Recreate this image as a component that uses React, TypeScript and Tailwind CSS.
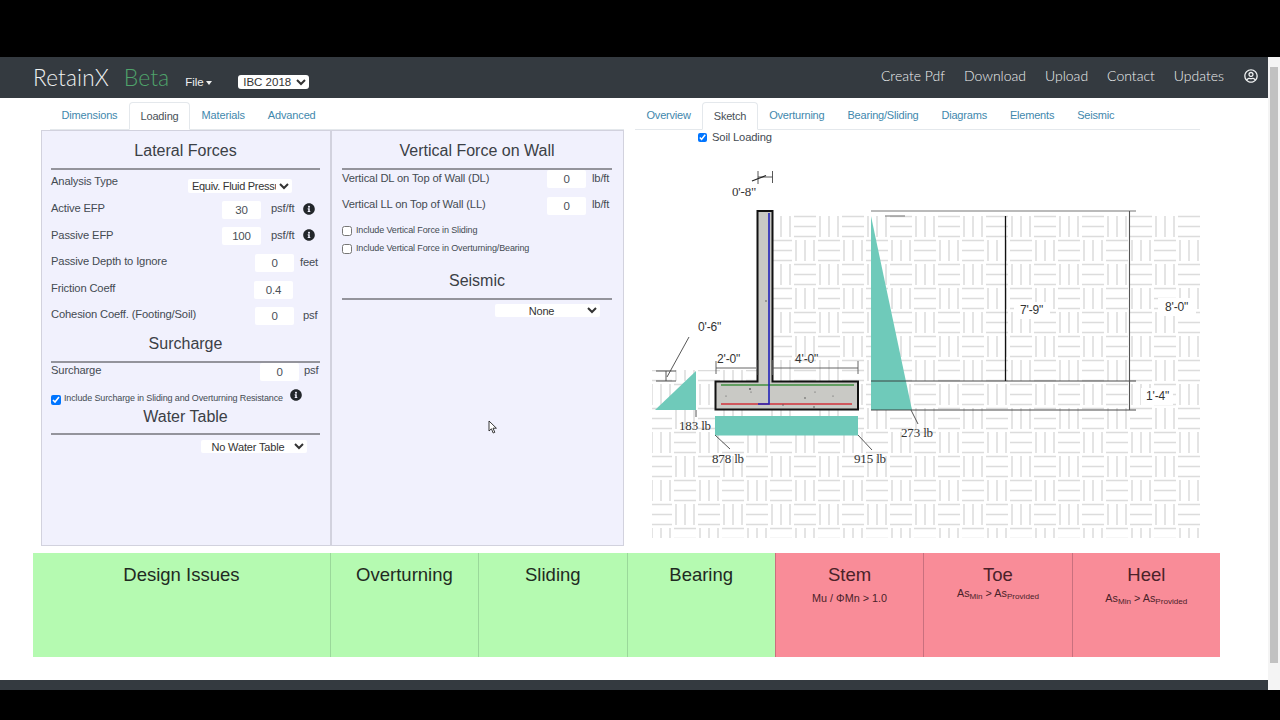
import { FaInfoCircle, FaRegUserCircle } from "react-icons/fa";

const leftTabs = ["Dimensions", "Loading", "Materials", "Advanced"];
const rightTabs = ["Overview", "Sketch", "Overturning", "Bearing/Sliding", "Diagrams", "Elements", "Seismic"];
const navLinks = ["Create Pdf", "Download", "Upload", "Contact", "Updates"];

function Tabs({ items, active }: { items: string[]; active: string }) {
  return (
    <div className="flex h-[28px] border-b border-[#e4e8ec] text-[11px]">
      {items.map((item) =>
        item === active ? (
          <div
            key={item}
            className="-mb-px flex h-[28px] items-center rounded-t border border-[#e4e8ec] border-b-white bg-white px-[10.5px] text-[#495057]"
          >
            {item}
          </div>
        ) : (
          <div key={item} className="flex items-center px-[11.5px] text-[#3f88ad]">
            {item}
          </div>
        )
      )}
    </div>
  );
}

function Heading({ title, className }: { title: string; className: string }) {
  return (
    <div className={`flex justify-center border-b-2 border-[#94949c] text-[16px] tracking-normal text-[#3b4046] ${className}`}>
      {title}
    </div>
  );
}

function NumInput({ value, className = "" }: { value: string; className?: string }) {
  return (
    <input
      readOnly
      value={value}
      className={`h-[18px] w-[39px] rounded-[2px] bg-white text-center text-[11.5px] text-[#495057] ${className}`}
    />
  );
}

function Info({ className = "" }: { className?: string }) {
  return <FaInfoCircle className={`text-[12px] text-[#23272b] ${className}`} />;
}

function Row({ label, children }: { label: string; children: React.ReactNode }) {
  return (
    <div className="relative flex h-[26.6px] items-center">
      <span className="mb-[3px]">{label}</span>
      {children}
    </div>
  );
}

function Sketch() {
  return (
    <svg width="570" height="400" viewBox="640 146 570 400" className="block">
      <defs>
        <pattern id="weave" x="961" y="215" width="48" height="48" patternUnits="userSpaceOnUse">
          <g stroke="#dcdcdc" strokeWidth="1.5" fill="none">
            <path d="M3 1V22M12 1V22M21 1V22" />
            <path d="M25 1.5H47M25 11.5H47M25 21.5H47" />
            <path d="M1 25.5H23M1 35.5H23M1 45.5H23" />
            <path d="M27 25V46M36 25V46M45 25V46" />
          </g>
        </pattern>
      </defs>
      <rect x="772" y="215" width="430" height="323" fill="url(#weave)" />
      <rect x="652" y="370" width="120" height="168" fill="url(#weave)" />

      {/* stem and footing */}
      <path d="M757.5 211H772.5V381.5H858V409.5H715.5V381.5H757.5Z" fill="#c9c9c5" stroke="#111" strokeWidth="2" />
      <path d="M721 385H854" stroke="#3f8f3f" strokeWidth="1.6" />
      <path d="M721 404H852" stroke="#d0303a" strokeWidth="1.6" />
      <path d="M769 213V404H758" stroke="#2222b8" strokeWidth="1.6" fill="none" />
      <g fill="#555">
        <circle cx="766" cy="301" r="0.8" />
        <circle cx="750" cy="389" r="0.9" />
        <circle cx="751" cy="392" r="0.6" />
        <circle cx="805" cy="398" r="0.8" />
        <circle cx="815" cy="392" r="0.6" />
        <circle cx="783" cy="405" r="0.7" />
        <circle cx="833" cy="396" r="0.6" />
        <circle cx="814" cy="407" r="0.8" />
        <circle cx="726" cy="396" r="0.6" />
      </g>

      {/* soil pressure */}
      <g fill="#6fcaba">
        <path d="M655 410L696 371V410Z" />
        <path d="M715 416H858V435.5H715Z" />
        <path d="M871 216L912 410H871Z" />
      </g>

      {/* dimension lines */}
      <g stroke="#444" strokeWidth="0.9" fill="none">
        <path d="M758 171V184M772.5 171V183M758 177H772.5" />
        <path d="M752 181L766 175.5" stroke="#222" strokeWidth="1.2" />
        <path d="M871 211H1136" stroke="#777" strokeWidth="1.2" />
        <path d="M885 216H905" stroke="#888" strokeWidth="1.2" />
        <path d="M871 381H1136M871 410H1136" stroke="#333" />
        <path d="M1129.5 211V410" stroke="#555" strokeWidth="1.1" />
        <path d="M1005.5 216V381" stroke="#111" strokeWidth="1.3" />
        <path d="M716 361V374M716 368H756M758 360V375M772.5 360V375M773 368H858M858 361V374" stroke="#555" />
        <path d="M656 371H676M656 381H676M666 371V381M689 337L667 377" />
        <path d="M696 410V417M715 435L730 449M858 435L872 450M911 410L918 424" />
      </g>

      {/* labels */}
      <rect x="1014" y="302" width="36" height="17" fill="#fff" />
      <rect x="1158" y="298" width="38" height="18" fill="#fff" />
      <rect x="1141" y="388" width="32" height="17" fill="#fff" />
      <g fontFamily="'Liberation Serif', serif" fontSize="13" fill="#333">
        <text x="732" y="196">0'-8"</text>
        <text x="679" y="430">183 lb</text>
        <text x="712" y="463">878 lb</text>
        <text x="854" y="463">915 lb</text>
        <text x="901" y="437">273 lb</text>
      </g>
      <g fontFamily="'Liberation Sans', sans-serif" fontSize="12" fill="#333">
        <text x="698" y="331">0'-6"</text>
        <text x="717" y="363">2'-0"</text>
        <text x="795" y="363">4'-0"</text>
        <text x="1020" y="314">7'-9"</text>
        <text x="1165" y="311">8'-0"</text>
        <text x="1146" y="400">1'-4"</text>
      </g>
    </svg>
  );
}

function StatusCard({ title, tone, children }: { title: string; tone: "ok" | "bad"; children?: React.ReactNode }) {
  return (
    <div
      className={
        tone === "ok"
          ? "border-l border-[#9ad89a] bg-[#b5fab1] pt-[11px] text-center tracking-normal text-[#1f2a22] first:border-l-0"
          : "border-l border-[#c9707e] bg-[#f98c98] pt-[11px] text-center tracking-normal text-[#4a2229]"
      }
    >
      <div className="text-[18.5px] leading-[22px]">{title}</div>
      {children}
    </div>
  );
}

export default function App() {
  return (
    <div className="flex h-[720px] w-[1280px] flex-col overflow-hidden bg-black font-['Liberation_Sans',sans-serif] text-[11.2px] tracking-[-0.15px] text-[#444b52]">
      <div className="h-[57px] shrink-0" />
      <div className="flex h-[633px] shrink-0">
        <div className="flex w-[1268px] flex-col bg-white">
          {/* nav */}
          <div className="flex h-[41px] shrink-0 items-center bg-[#343a40] pl-[33px] pr-[10px] font-['Lato',sans-serif] tracking-normal text-[#eef0f0]">
            <span className="text-[22.5px] font-light tracking-[0.2px]">RetainX</span>
            <span className="ml-[15px] text-[23px] font-light text-[#4fa36b]">Beta</span>
            <span className="ml-[16px] mt-[11px] flex items-center font-['Liberation_Sans',sans-serif] text-[11.5px]">
              File
              <span className="ml-[2px] border-x-[3.5px] border-t-[4px] border-x-transparent border-t-[#eef0f0]" />
            </span>
            <select className="ml-[26px] mt-[8px] h-[14px] w-[71px] rounded-[3px] bg-white text-center font-['Liberation_Sans',sans-serif] text-[11.5px] text-[#333] [text-align-last:center]">
              <option>IBC 2018</option>
            </select>
            <div className="mb-[4px] ml-auto flex items-center gap-[19px] text-[14px] font-light">
              {navLinks.map((link) => (
                <span key={link}>{link}</span>
              ))}
              <FaRegUserCircle className="ml-[1px] text-[14px]" />
            </div>
          </div>

          {/* panes */}
          <div className="flex h-[448px] shrink-0 pl-[41px] pt-[4px]">
            <div className="w-[583px]">
              <div className="pl-[9px]">
                <Tabs items={leftTabs} active="Loading" />
              </div>
              <div className="flex h-[416px] border border-[#d2d2de] bg-[#f1f1fd]">
                <div className="w-[290px] border-r-2 border-[#d2d2de] pl-[9px] pr-[10px]">
                  <Heading title="Lateral Forces" className="h-[39px] items-center pt-[2px]" />
                  <Row label="Analysis Type">
                    <select className="ml-auto mr-[28px] mt-[5px] h-[14px] w-[104px] rounded-[2px] bg-white text-[11px] tracking-[-0.3px] text-[#333]">
                      <option>Equiv. Fluid Pressure</option>
                    </select>
                  </Row>
                  <Row label="Active EFP">
                    <NumInput value="30" className="absolute left-[171px]" />
                    <span className="absolute left-[220px] mb-[2px]">psf/ft</span>
                    <Info className="absolute left-[252px] mb-[2px]" />
                  </Row>
                  <Row label="Passive EFP">
                    <NumInput value="100" className="absolute left-[171px]" />
                    <span className="absolute left-[220px] mb-[2px]">psf/ft</span>
                    <Info className="absolute left-[252px] mb-[2px]" />
                  </Row>
                  <Row label="Passive Depth to Ignore">
                    <NumInput value="0" className="absolute left-[204px]" />
                    <span className="absolute left-[249px] mb-[2px]">feet</span>
                  </Row>
                  <Row label="Friction Coeff">
                    <NumInput value="0.4" className="absolute left-[203px]" />
                  </Row>
                  <Row label="Cohesion Coeff. (Footing/Soil)">
                    <NumInput value="0" className="absolute left-[204px]" />
                    <span className="absolute left-[252px] mb-[2px]">psf</span>
                  </Row>
                  <Heading title="Surcharge" className="h-[33px] items-start pt-[2px]" />
                  <div className="relative flex h-[18px] items-center">
                    <span className="mb-[3px]">Surcharge</span>
                    <NumInput value="0" className="absolute left-[209px]" />
                    <span className="absolute left-[253px] mb-[2px]">psf</span>
                  </div>
                  <div className="relative flex h-[25px] items-end">
                    <input type="checkbox" readOnly checked className="mb-[1px] h-[10px] w-[10px] accent-[#0075ff]" />
                    <span className="ml-[3px] text-[9px] tracking-[-0.13px]">Include Surcharge in Sliding and Overturning Resistance</span>
                    <Info className="absolute left-[239px] top-[8px]" />
                  </div>
                  <div className="-mt-px">
                    <Heading title="Water Table" className="h-[30px] items-start" />
                  </div>
                  <div className="mt-[5px] flex">
                    <select className="ml-[150px] h-[13px] w-[106px] rounded-[2px] bg-white text-[11px] text-[#333] [text-align-last:center]">
                      <option>No Water Table</option>
                    </select>
                  </div>
                </div>
                <div className="w-[291px] pl-[10px] pr-[11px]">
                  <Heading title="Vertical Force on Wall" className="h-[39px] items-center pt-[2px]" />
                  <div className="relative flex h-[18px] items-center">
                    <span className="mb-[2px]">Vertical DL on Top of Wall (DL)</span>
                    <NumInput value="0" className="absolute left-[205px]" />
                    <span className="absolute left-[250px] mb-[2px]">lb/ft</span>
                  </div>
                  <div className="relative mt-[8.5px] flex h-[18px] items-center">
                    <span className="mb-[2px]">Vertical LL on Top of Wall (LL)</span>
                    <NumInput value="0" className="absolute left-[205px]" />
                    <span className="absolute left-[250px] mb-[2px]">lb/ft</span>
                  </div>
                  <label className="mt-[7px] flex h-[18px] items-center text-[9px] tracking-[-0.13px]">
                    <input type="checkbox" readOnly className="mr-[4px] h-[10px] w-[10px]" />
                    Include Vertical Force in Sliding
                  </label>
                  <label className="flex h-[18px] items-center text-[9px] tracking-[-0.13px]">
                    <input type="checkbox" readOnly className="mr-[4px] h-[10px] w-[10px]" />
                    Include Vertical Force in Overturning/Bearing
                  </label>
                  <Heading title="Seismic" className="h-[42px] items-start pt-[11px]" />
                  <div className="mt-[4px] flex">
                    <select className="ml-[153px] h-[13px] w-[105px] rounded-[2px] bg-white text-[11px] text-[#333] [text-align-last:center]">
                      <option>None</option>
                    </select>
                  </div>
                </div>
              </div>
            </div>

            <div className="ml-[11px] w-[575px]">
              <div className="w-[565px] tracking-[-0.2px]">
                <Tabs items={rightTabs} active="Sketch" />
              </div>
              <label className="ml-[63px] flex h-[16px] items-center pb-[2px]">
                <input type="checkbox" readOnly checked className="mr-[5px] h-[9px] w-[9px]" />
                Soil Loading
              </label>
              <div className="ml-[5px]">
                <Sketch />
              </div>
            </div>
          </div>

          {/* status */}
          <div className="ml-[33px] mt-[7px] grid h-[104px] w-[1187px] shrink-0 grid-cols-[2fr_repeat(6,1fr)]">
            <StatusCard title="Design Issues" tone="ok" />
            <StatusCard title="Overturning" tone="ok" />
            <StatusCard title="Sliding" tone="ok" />
            <StatusCard title="Bearing" tone="ok" />
            <StatusCard title="Stem" tone="bad">
              <div className="mt-[4px] text-[10.8px]">Mu / ΦMn &gt; 1.0</div>
            </StatusCard>
            <StatusCard title="Toe" tone="bad">
              <div className="mt-[-1px] text-[10.8px]">
                As<sub>Min</sub> &gt; As<sub>Provided</sub>
              </div>
            </StatusCard>
            <StatusCard title="Heel" tone="bad">
              <div className="mt-[4px] text-[10.8px]">
                As<sub>Min</sub> &gt; As<sub>Provided</sub>
              </div>
            </StatusCard>
          </div>

          <div className="mt-auto h-[10px] shrink-0 bg-[#343a40]" />
        </div>

        {/* scrollbar */}
        <div className="w-[12px] bg-[#f4f4f4]">
          <div className="ml-[2px] mt-[10px] h-[596px] w-[8px] bg-[#c1c1c1]" />
        </div>
      </div>

      {/* mouse pointer */}
      <svg width="10" height="14" viewBox="0 0 10 14" className="absolute left-[488px] top-[420px]">
        <path d="M1 1V11L3.4 8.8L5.2 13L6.8 12.3L5 8.2H8.4Z" fill="#fff" stroke="#222" strokeWidth="0.9" />
      </svg>
    </div>
  );
}
